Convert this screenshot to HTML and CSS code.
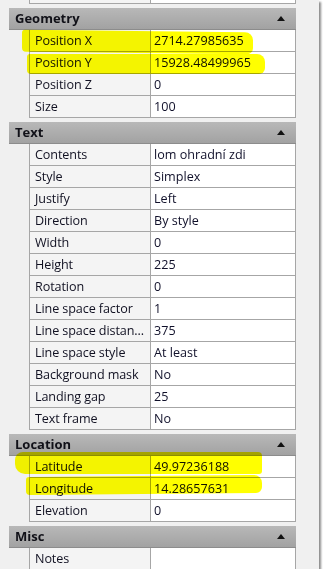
FILE: index.html
```html
<!DOCTYPE html>
<html lang="en">
<head>
    <meta charset="UTF-8">
    <meta name="viewport" content="width=device-width, initial-scale=1.0">
    <title>Properties</title>
    <link rel="stylesheet" href="styles.css">
</head>
<body>
    <div class="frame">
        <div class="row stub"><div class="label"></div><div class="value"></div></div>

        <div class="section">
            <div class="header">Geometry <span class="arrow"></span></div>
            <div class="row"><div class="label">Position X</div><div class="value">2714.27985635</div></div>
            <div class="row"><div class="label">Position Y</div><div class="value">15928.48499965</div></div>
            <div class="row"><div class="label">Position Z</div><div class="value">0</div></div>
            <div class="row"><div class="label">Size</div><div class="value">100</div></div>
        </div>

        <div class="section">
            <div class="header">Text <span class="arrow"></span></div>
            <div class="row"><div class="label">Contents</div><div class="value">lom ohradní zdi</div></div>
            <div class="row"><div class="label">Style</div><div class="value">Simplex</div></div>
            <div class="row"><div class="label">Justify</div><div class="value">Left</div></div>
            <div class="row"><div class="label">Direction</div><div class="value">By style</div></div>
            <div class="row"><div class="label">Width</div><div class="value">0</div></div>
            <div class="row"><div class="label">Height</div><div class="value">225</div></div>
            <div class="row"><div class="label">Rotation</div><div class="value">0</div></div>
            <div class="row"><div class="label">Line space factor</div><div class="value">1</div></div>
            <div class="row"><div class="label">Line space distan...</div><div class="value">375</div></div>
            <div class="row"><div class="label">Line space style</div><div class="value">At least</div></div>
            <div class="row"><div class="label">Background mask</div><div class="value">No</div></div>
            <div class="row"><div class="label">Landing gap</div><div class="value">25</div></div>
            <div class="row"><div class="label">Text frame</div><div class="value">No</div></div>
        </div>

        <div class="section">
            <div class="header">Location <span class="arrow"></span></div>
            <div class="row"><div class="label">Latitude</div><div class="value">49.97236188</div></div>
            <div class="row"><div class="label">Longitude</div><div class="value">14.28657631</div></div>
            <div class="row"><div class="label">Elevation</div><div class="value">0</div></div>
        </div>

        <div class="section">
            <div class="header">Misc <span class="arrow"></span></div>
            <div class="row"><div class="label">Notes</div><div class="value"></div></div>
        </div>

        <!-- marker highlights drawn over the grid -->
        <div class="marker m1"></div>
        <div class="marker m2"></div>
        <div class="marker m3"></div>
        <div class="marker m4"></div>
    </div>
</body>
</html>
```

FILE: styles.css
```css
body {
    margin: 0;
    background-color: white;
    font-family: "Open Sans", "Noto Sans", sans-serif;
    font-size: 12.6px;
    color: #111122;
}
.frame {
    position: relative;
    width: 319px;
    height: 569px;
    background-color: #f0f0f0;
    box-shadow: 2px 2px 2px rgba(0, 0, 0, 0.45);
    overflow: hidden;
    padding-left: 9px;
    box-sizing: border-box;
}
.section {
    width: 287px;
    margin-top: 4px;
}
.header {
    position: relative;
    height: 22px;
    box-sizing: border-box;
    background: linear-gradient(#b8b8b8, #a2a2a2);
    border-bottom: 1px solid #8c8c8c;
    font-weight: bold;
    font-size: 13px;
    line-height: 21px;
    padding-left: 6px;
    color: #111118;
}
.arrow {
    position: absolute;
    right: 11px;
    top: 8px;
    width: 0;
    height: 0;
    border-left: 4px solid transparent;
    border-right: 4px solid transparent;
    border-bottom: 5px solid #111;
}
.row {
    display: grid;
    grid-template-columns: 122px 145px;
    margin-left: 20px;
    height: 22px;
}
.row .label,
.row .value {
    box-sizing: border-box;
    border-bottom: 1px solid #a6a6a6;
    border-right: 1px solid #a6a6a6;
    line-height: 21px;
    white-space: nowrap;
    overflow: hidden;
}
.row .label {
    background-color: #f4f4f4;
    border-left: 1px solid #a6a6a6;
    padding-left: 5px;
    letter-spacing: -0.1px;
}
.row .value {
    background-color: white;
    padding-left: 3px;
    color: #10102a;
}
.stub {
    height: 4px;
}
.marker {
    position: absolute;
    background-color: #ffff00;
    mix-blend-mode: multiply;
    border-radius: 3px 8px 6px 4px;
}
.m1 {
    left: 22px;
    top: 31px;
    width: 231px;
    height: 22px;
    transform: skewY(0.6deg);
}
.m2 {
    left: 27px;
    top: 54px;
    width: 238px;
    height: 20px;
}
.m3 {
    left: 15px;
    top: 452px;
    width: 247px;
    height: 22px;
    border-radius: 8px 4px 3px 10px;
}
.m4 {
    left: 26px;
    top: 476px;
    width: 236px;
    height: 18px;
    transform: skewY(-0.5deg);
}
```
